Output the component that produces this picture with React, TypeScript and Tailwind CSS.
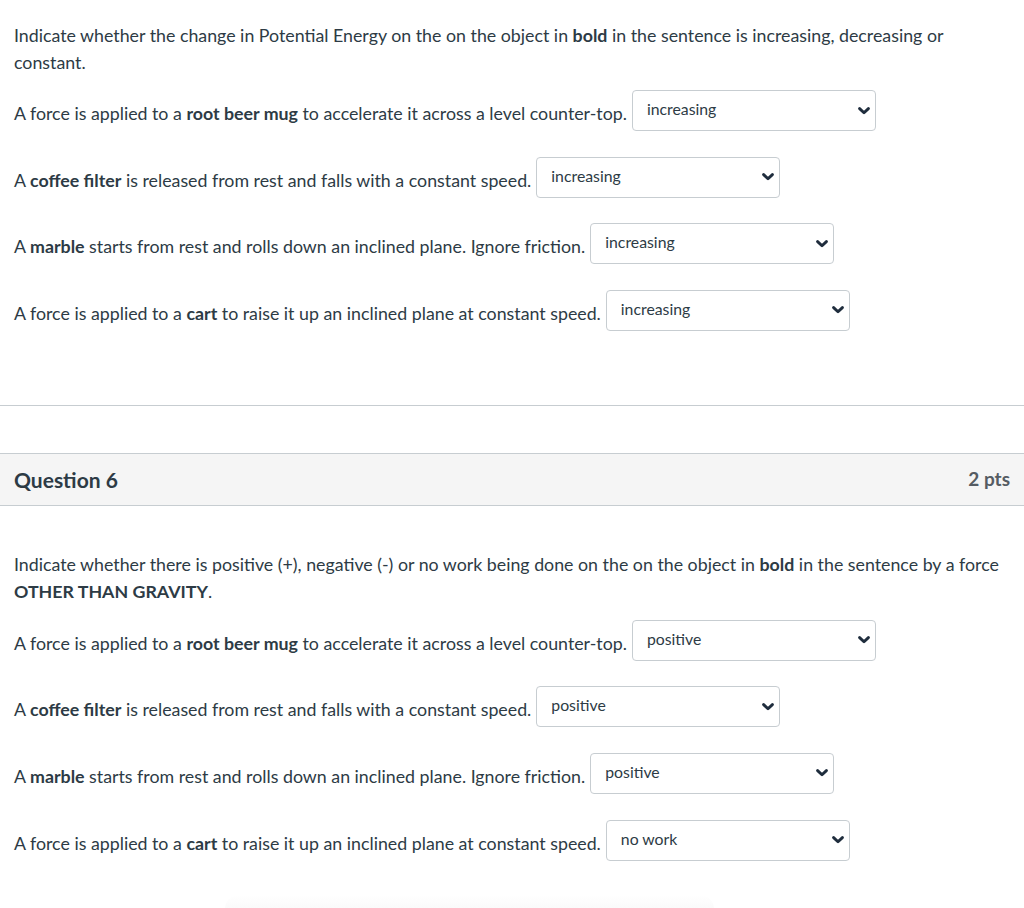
import React from "react";

const Chevron = () => (
  <svg width="12" height="8" viewBox="0 0 12 8" className="shrink-0">
    <polyline points="1.6,1.6 6,5.8 10.4,1.6" fill="none" stroke="#1f2d3d" strokeWidth="2.9" strokeLinecap="round" strokeLinejoin="round" />
  </svg>
);

const Select = ({ value }: { value: string }) => (
  <div className="ml-[5px] flex h-[41px] w-[244px] shrink-0 items-center justify-between rounded-[4px] border border-[#c7cdd1] bg-white pl-[14px] pr-[5px]">
    <span className="-mt-[3px] text-[15.8px] leading-[20px]">{value}</span>
    <Chevron />
  </div>
);

type Row = { pre: string; bold: string; post: string; value: string };

const QRow = ({ r }: { r: Row }) => (
  <div className="flex items-start">
    <span className="mt-[10px] whitespace-nowrap text-[17.8px] leading-[27px]">
      {r.pre}
      <b className="font-bold">{r.bold}</b>
      {r.post}
    </span>
    <Select value={r.value} />
  </div>
);

const rowsA: Row[] = [
  { pre: "A force is applied to a ", bold: "root beer mug", post: " to accelerate it across a level counter-top.", value: "increasing" },
  { pre: "A ", bold: "coffee filter", post: " is released from rest and falls with a constant speed.", value: "increasing" },
  { pre: "A ", bold: "marble", post: " starts from rest and rolls down an inclined plane. Ignore friction.", value: "increasing" },
  { pre: "A force is applied to a ", bold: "cart", post: " to raise it up an inclined plane at constant speed.", value: "increasing" },
];

const rowsB: Row[] = [
  { pre: "A force is applied to a ", bold: "root beer mug", post: " to accelerate it across a level counter-top.", value: "positive" },
  { pre: "A ", bold: "coffee filter", post: " is released from rest and falls with a constant speed.", value: "positive" },
  { pre: "A ", bold: "marble", post: " starts from rest and rolls down an inclined plane. Ignore friction.", value: "positive" },
  { pre: "A force is applied to a ", bold: "cart", post: " to raise it up an inclined plane at constant speed.", value: "no work" },
];

export default function App() {
  return (
    <div
      className="h-[908px] w-[1024px] overflow-hidden bg-white text-[#2d3b45]"
      style={{ fontFamily: "Lato, 'Noto Sans', sans-serif" }}
    >
      <div className="px-[14px] pt-[22px]">
        <p className="pr-[40px] text-[17.8px] leading-[27px]">
          Indicate whether the change in Potential Energy on the on the object in <b className="font-bold">bold</b> in the sentence is increasing, decreasing or constant.
        </p>
        <div className="mt-[14px] flex flex-col gap-[25.6px]">
          {rowsA.map((r, i) => (
            <QRow key={i} r={r} />
          ))}
        </div>
      </div>

      <div className="mt-[74px] h-px w-full bg-[#c7cdd1]" />

      <div className="mt-[47px] flex h-[53px] items-center justify-between border-y border-[#c7cdd1] bg-[#f5f5f5] px-[14px]">
        <span className="text-[21px] font-bold">Question 6</span>
        <span className="text-[19px] font-bold text-[#555c63]">2 pts</span>
      </div>

      <div className="px-[14px] pt-[45px]">
        <p className="text-[17.8px] leading-[27px]">
          Indicate whether there is positive (+), negative (-) or no work being done on the on the object in <b className="font-bold">bold</b> in the sentence by a force{" "}
          <b className="font-bold">OTHER THAN GRAVITY</b>.
        </p>
        <div className="mt-[15px] flex flex-col gap-[25.6px]">
          {rowsB.map((r, i) => (
            <QRow key={i} r={r} />
          ))}
        </div>
      </div>

      <div className="ml-[225px] mr-[310px] mt-[34px] h-[14px] rounded-t-[60px] bg-gradient-to-b from-white to-[#fafafa]" />
    </div>
  );
}
